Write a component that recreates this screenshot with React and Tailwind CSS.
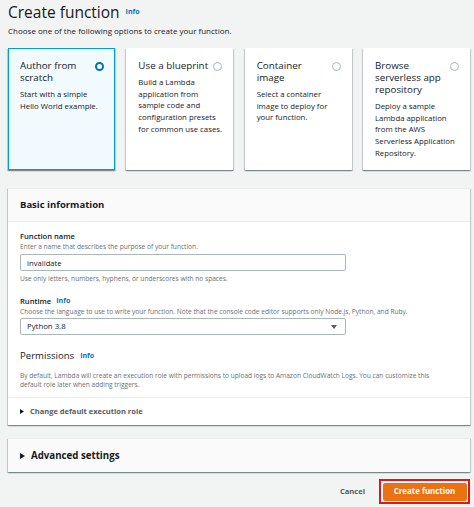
import { useState } from "react";

const OPTIONS = [
  {
    id: "scratch",
    title: "Author from scratch",
    desc: "Start with a simple Hello World example.",
  },
  {
    id: "blueprint",
    title: "Use a blueprint",
    desc: "Build a Lambda application from sample code and configuration presets for common use cases.",
  },
  {
    id: "container",
    title: "Container image",
    desc: "Select a container image to deploy for your function.",
  },
  {
    id: "serverless",
    title: "Browse serverless app repository",
    desc: "Deploy a sample Lambda application from the AWS Serverless Application Repository.",
  },
];

const cardShadow =
  "shadow-[0_1px_1px_0_rgba(0,28,36,0.3),1px_1px_1px_0_rgba(0,28,36,0.15),-1px_1px_1px_0_rgba(0,28,36,0.15)]";

const Info = ({ className = "" }) => (
  <a className={`text-[7px] font-bold text-[#0073bb] ${className}`}>Info</a>
);

const Caret = ({ size = 5 }) => (
  <svg width={size} height={size + 1} viewBox="0 0 5 6" className="shrink-0">
    <polygon points="0,0 5,3 0,6" fill="#16191f" />
  </svg>
);

const OptionCard = ({ option, selected, onClick }) => {
  return (
    <div
      onClick={onClick}
      className={`h-[122px] border pl-[11px] pr-[10px] pt-[11px] cursor-pointer ${cardShadow}
        ${selected ? "border-[#00a1c9] bg-[#f1faff]" : "border-transparent bg-white"}`}
    >
      {/* 제목 + 라디오 */}
      <div className="flex items-start gap-[2px]">
        <div className="flex-1 min-w-0 text-[9.8px] leading-[12px]">{option.title}</div>
        <span
          className={`mt-[1.5px] h-[9px] w-[9px] shrink-0 rounded-full bg-white ${
            selected ? "border-[2.5px] border-[#0073bb]" : "border border-[#aab7b8]"
          }`}
        />
      </div>
      {/* 설명 */}
      <p className="mt-[5px] text-[7.8px] leading-[11.7px]">{option.desc}</p>
    </div>
  );
};

const Label = ({ children }) => (
  <div className="flex items-center gap-[5px] text-[7.6px] font-semibold leading-[10px]">
    {children}
  </div>
);

const Hint = ({ children, className = "" }) => (
  <div className={`text-[6.6px] leading-[9px] text-[#687078] ${className}`}>{children}</div>
);

export default function App() {
  const [selected, setSelected] = useState("scratch");
  const [name, setName] = useState("invalidate");

  return (
    <div className="min-h-[507px] bg-[#f2f3f3] pl-2 pr-1 font-['Open_Sans',sans-serif] text-[#16191f]">
      {/* 헤더 */}
      <div className="flex items-center gap-[6px] h-[24px]">
        <h1 className="text-[15.5px] leading-[24px]">Create function</h1>
        <Info />
      </div>
      <p className="mt-[1px] text-[8px] leading-[12px]">
        Choose one of the following options to create your function.
      </p>

      {/* 옵션 카드 */}
      <div className="mt-[11px] grid grid-cols-4 gap-[11.33px]">
        {OPTIONS.map((opt) => (
          <OptionCard
            key={opt.id}
            option={opt}
            selected={selected === opt.id}
            onClick={() => setSelected(opt.id)}
          />
        ))}
      </div>

      {/* Basic information */}
      <section className={`mt-[18px] bg-white border-t border-[#eaeded] ${cardShadow}`}>
        <header className="flex h-[33px] items-center border-b border-[#eaeded] bg-[#fafafa] px-[12px] text-[9.5px] font-bold">
          Basic information
        </header>

        <div className="px-[12px] pt-[9px]">
          <Label>Function name</Label>
          <Hint className="mt-[1px]">Enter a name that describes the purpose of your function.</Hint>
          <input
            value={name}
            onChange={(e) => setName(e.target.value)}
            className="mt-[3px] block h-[17px] w-[326px] rounded-[2px] border border-[#aab7b8] px-[6px] text-[7.7px] outline-none"
          />
          <Hint className="mt-[3px]">
            Use only letters, numbers, hyphens, or underscores with no spaces.
          </Hint>

          <div className="mt-[12.5px]">
            <Label>
              Runtime <Info className="text-[6.6px]" />
            </Label>
          </div>
          <Hint className="mt-[1px]">
            Choose the language to use to write your function. Note that the console code editor
            supports only Node.js, Python, and Ruby.
          </Hint>
          <div className="mt-[2.5px] flex h-[17px] w-[326px] items-center justify-between rounded-[2px] border border-[#aab7b8] pl-[6px] pr-[8px] text-[7.8px]">
            <span>Python 3.8</span>
            <svg width="6" height="4" viewBox="0 0 6 4">
              <polygon points="0,0 6,0 3,4" fill="#545b64" />
            </svg>
          </div>

          <div className="mt-[15px] flex items-center gap-[6px]">
            <span className="text-[9.6px] leading-[12px]">Permissions</span>
            <Info />
          </div>
          <p className="mt-[10px] pb-[8px] text-[6.6px] leading-[8.7px] text-[#687078]">
            By default, Lambda will create an execution role with permissions to upload logs to
            Amazon CloudWatch Logs. You can customize this
            <br />
            default role later when adding triggers.
          </p>
        </div>

        <div className="flex h-[28px] items-center gap-[6px] border-t border-[#eaeded] px-[12px] text-[7.5px] font-bold text-[#545b64]">
          <Caret size={4} />
          Change default execution role
        </div>
      </section>

      {/* Advanced settings */}
      <section
        className={`mt-[13px] flex h-[34px] items-center gap-[6px] border-t border-[#eaeded] bg-[#fafafa] px-[12px] text-[9.7px] font-bold ${cardShadow}`}
      >
        <Caret size={5} />
        Advanced settings
      </section>

      {/* 하단 버튼 */}
      <div className="mt-[7px] flex items-center justify-end gap-[14px]">
        <button className="text-[7.6px] font-bold text-[#545b64]">Cancel</button>
        <div className="border-2 border-[#e3151b] bg-white p-[1.5px]">
          <button className="flex h-[18px] w-[84px] items-center justify-center rounded-[2px] bg-[#ec7211] text-[7.9px] font-bold text-white">
            Create function
          </button>
        </div>
      </div>
    </div>
  );
}
